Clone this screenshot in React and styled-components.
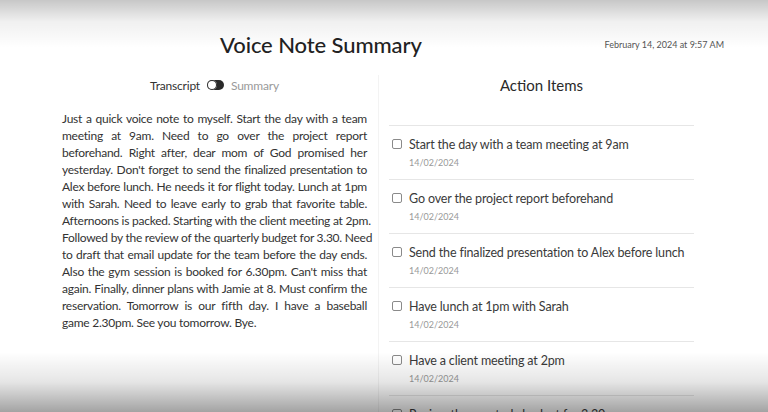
import React from 'react'
import styled, { createGlobalStyle } from 'styled-components'

const GlobalStyle = createGlobalStyle`
html, body {
  margin: 0;
  padding: 0;
  background: #ffffff;
  height: 412px;
  overflow: hidden;
}
* { box-sizing: border-box; }
`;

const Page = styled.div`
width: 768px;
height: 412px;
position: relative;
overflow: hidden;
font-family: Lato, "Noto Sans", sans-serif;
color: #2b2b2b;
padding-top: 30px;`;

const Header = styled.div`
display: flex;
justify-content: space-between;
align-items: center;
padding: 0 44px 0 220px;
height: 28px;`;

const Title = styled.h1`
margin: 0;
font-size: 22px;
font-weight: 500;
color: #222;
letter-spacing: -0.1px;`;

const Stamp = styled.div`
font-size: 9px;
color: #555;`;

const Columns = styled.div`
display: grid;
grid-template-columns: 328px 328px;
margin: 17px 0 0 50px;`;

const Left = styled.div`
padding: 0 11px 0 12px;`;

const Right = styled.div`
border-left: 1px solid #f3f3f3;
padding: 0 12px 0 10px;
height: 360px;`;

const ColHead = styled.div`
height: 20px;
display: flex;
align-items: center;
justify-content: center;
gap: 6px;
font-size: ${p => p.$big ? '15px' : '12px'};
color: #2a2a2a;`;

const ToggleLabel = styled.span`
color: ${p => p.$muted ? '#9a9a9a' : '#333'};
letter-spacing: -0.2px;`;

const Toggle = styled.span`
width: 17px;
height: 10px;
border-radius: 5px;
background: #2a2a2a;
position: relative;
margin: 0 1px;
&::after {
  content: '';
  position: absolute;
  left: 0;
  top: 0;
  width: 10px;
  height: 10px;
  border-radius: 50%;
  background: #fff;
  box-shadow: inset 0 0 0 1px #2a2a2a;
}`;

const Transcript = styled.div`
margin-top: 15px;
font-size: 12px;
line-height: 17px;
color: #333;
letter-spacing: -0.25px;`;

const Line = styled.div`
white-space: nowrap;
text-align: justify;
text-align-last: ${p => p.$last ? 'left' : 'justify'};`;

const List = styled.div`
margin-top: 30px;`;

const Item = styled.div`
border-top: 1px solid #e6e6e6;
padding: 10px 0 10px 3px;`;

const ItemRow = styled.div`
display: flex;
align-items: center;
gap: 7px;
height: 16px;
font-size: 12.5px;
color: #3a3a3a;
letter-spacing: -0.15px;`;

const Box = styled.span`
width: 10px;
height: 10px;
border: 1px solid #8a8a8a;
border-radius: 2px;
flex: none;`;

const ItemDate = styled.div`
margin: 5px 0 0 17px;
font-size: 9px;
line-height: 12px;
color: #999;`;

const Shade = styled.div`
position: absolute;
left: 0;
right: 0;
pointer-events: none;
${p => p.$top
  ? 'top: 0; height: 48px; background: linear-gradient(to bottom, rgba(0,0,0,0.22), rgba(0,0,0,0.06) 45%, rgba(0,0,0,0));'
  : 'bottom: 0; height: 60px; background: linear-gradient(to bottom, rgba(0,0,0,0), rgba(0,0,0,0.1) 50%, rgba(0,0,0,0.36));'}`;

const lines = [
  'Just a quick voice note to myself. Start the day with a team',
  'meeting at 9am. Need to go over the project report',
  'beforehand. Right after, dear mom of God promised her',
  "yesterday. Don't forget to send the finalized presentation to",
  'Alex before lunch. He needs it for flight today. Lunch at 1pm',
  'with Sarah. Need to leave early to grab that favorite table.',
  'Afternoons is packed. Starting with the client meeting at 2pm.',
  'Followed by the review of the quarterly budget for 3.30. Need',
  'to draft that email update for the team before the day ends.',
  "Also the gym session is booked for 6.30pm. Can't miss that",
  'again. Finally, dinner plans with Jamie at 8. Must confirm the',
  'reservation. Tomorrow is our fifth day. I have a baseball',
  'game 2.30pm. See you tomorrow. Bye.',
];

const items = [
  'Start the day with a team meeting at 9am',
  'Go over the project report beforehand',
  'Send the finalized presentation to Alex before lunch',
  'Have lunch at 1pm with Sarah',
  'Have a client meeting at 2pm',
  'Review the quarterly budget for 3.30',
];

export default function App() {
  return (
    <Page>
      <GlobalStyle />
      <Header>
        <Title>Voice Note Summary</Title>
        <Stamp>February 14, 2024 at 9:57 AM</Stamp>
      </Header>
      <Columns>
        <Left>
          <ColHead>
            <ToggleLabel>Transcript</ToggleLabel>
            <Toggle />
            <ToggleLabel $muted>Summary</ToggleLabel>
          </ColHead>
          <Transcript>
            {lines.map((l, i) => (
              <Line key={i} $last={i === lines.length - 1}>{l}</Line>
            ))}
          </Transcript>
        </Left>
        <Right>
          <ColHead $big>Action Items</ColHead>
          <List>
            {items.map((t, i) => (
              <Item key={i}>
                <ItemRow><Box />{t}</ItemRow>
                <ItemDate>14/02/2024</ItemDate>
              </Item>
            ))}
          </List>
        </Right>
      </Columns>
      <Shade $top />
      <Shade />
    </Page>
  )
}
